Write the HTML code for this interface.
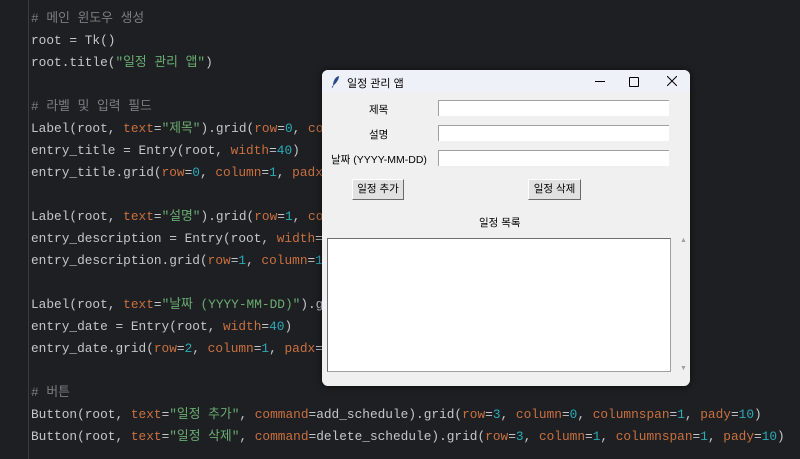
<!DOCTYPE html>
<html><head><meta charset="utf-8"><style>
body{margin:0;width:800px;height:459px;background:#1e1f22;overflow:hidden;position:relative;font-family:"Liberation Mono","Noto Sans CJK KR",monospace}
.gut{position:absolute;left:28px;top:0;width:1px;height:459px;background:#3a3b3f}
.code{position:absolute;left:31px;top:8px;font-size:12.8px;line-height:22px;color:#c4c6cc;white-space:pre}
.k{color:#c8703f}.s{color:#6aab73}.n{color:#2aacb8}.c{color:#7a7e85}
.win{position:absolute;left:322px;top:70px;width:368px;height:316px;background:#f0f0f0;border-radius:6px;box-shadow:0 0 8px rgba(0,0,0,.6);overflow:hidden;font-family:"Liberation Sans","Noto Sans CJK KR",sans-serif;font-size:10.5px;color:#000}
.tb{position:absolute;left:0;top:0;width:368px;height:22px;background:#eef2f8}
.a{position:absolute;white-space:nowrap}
.e{position:absolute;left:116px;width:230px;height:15px;background:#fff;border-top:1px solid #a0a0a0;border-left:1px solid #a0a0a0}
.b{position:absolute;top:109px;height:21px;background:#e1e1e1;border:1px solid #fff;border-right-color:#696969;border-bottom-color:#696969;box-sizing:border-box;text-align:center;line-height:19px}
</style></head><body>
<div class="gut"></div>
<div class="code"><span class="c"># 메인 윈도우 생성</span>
root = Tk()
root.title(<span class="s">"일정 관리 앱"</span>)

<span class="c"># 라벨 및 입력 필드</span>
Label(root, <span class="k">text</span>=<span class="s">"제목"</span>).grid(<span class="k">row</span>=<span class="n">0</span>, <span class="k">column</span>=<span class="n">0</span>)
entry_title = Entry(root, <span class="k">width</span>=<span class="n">40</span>)
entry_title.grid(<span class="k">row</span>=<span class="n">0</span>, <span class="k">column</span>=<span class="n">1</span>, <span class="k">padx</span>=<span class="n">5</span>)

Label(root, <span class="k">text</span>=<span class="s">"설명"</span>).grid(<span class="k">row</span>=<span class="n">1</span>, <span class="k">column</span>=<span class="n">0</span>)
entry_description = Entry(root, <span class="k">width</span>=<span class="n">40</span>)
entry_description.grid(<span class="k">row</span>=<span class="n">1</span>, <span class="k">column</span>=<span class="n">1</span>, <span class="k">padx</span>=<span class="n">5</span>)

Label(root, <span class="k">text</span>=<span class="s">"날짜 (YYYY-MM-DD)"</span>).grid(<span class="k">row</span>=<span class="n">2</span>)
entry_date = Entry(root, <span class="k">width</span>=<span class="n">40</span>)
entry_date.grid(<span class="k">row</span>=<span class="n">2</span>, <span class="k">column</span>=<span class="n">1</span>, <span class="k">padx</span>=<span class="n">5</span>)

<span class="c"># 버튼</span>
Button(root, <span class="k">text</span>=<span class="s">"일정 추가"</span>, <span class="k">command</span>=add_schedule).grid(<span class="k">row</span>=<span class="n">3</span>, <span class="k">column</span>=<span class="n">0</span>, <span class="k">columnspan</span>=<span class="n">1</span>, <span class="k">pady</span>=<span class="n">10</span>)
Button(root, <span class="k">text</span>=<span class="s">"일정 삭제"</span>, <span class="k">command</span>=delete_schedule).grid(<span class="k">row</span>=<span class="n">3</span>, <span class="k">column</span>=<span class="n">1</span>, <span class="k">columnspan</span>=<span class="n">1</span>, <span class="k">pady</span>=<span class="n">10</span>)</div>
<div class="win">
 <div class="tb"></div>
 <svg class="a" style="left:9px;top:5px" width="10" height="13" viewBox="0 0 10 13"><path d="M8 1C4 2 2 6 2 11L4 9C6 7 8 4 8 1Z" fill="#2b4a8a"/><path d="M2 11L1 12.5" stroke="#2b4a8a"/></svg>
 <div class="a" style="left:25px;top:5px;font-size:11px">일정 관리 앱</div>
 <div class="a" style="left:273px;top:11px;width:10px;height:1px;background:#000"></div>
 <div class="a" style="left:307px;top:7px;width:8px;height:8px;border:1px solid #000;border-radius:1px"></div>
 <svg class="a" style="left:345px;top:6px" width="10" height="10"><path d="M0 0L10 10M10 0L0 10" stroke="#000" stroke-width="1"/></svg>
 <div class="a" style="left:47px;top:32px">제목</div>
 <div class="a" style="left:47px;top:57px">설명</div>
 <div class="a" style="left:9px;top:82px">날짜 (YYYY-MM-DD)</div>
 <div class="e" style="top:30px"></div>
 <div class="e" style="top:55px"></div>
 <div class="e" style="top:80px"></div>
 <div class="b" style="left:30px;width:52px">일정 추가</div>
 <div class="b" style="left:206px;width:53px">일정 삭제</div>
 <div class="a" style="left:157px;top:145px">일정 목록</div>
 <div class="a" style="left:5px;top:168px;width:342px;height:132px;background:#fff;border:1px solid #6e6e6e;border-bottom-color:#a0a0a0;border-right-color:#a0a0a0"></div>
 <div class="a" style="left:358px;top:167px;font-size:7px;color:#a0a0a0">▲</div>
 <div class="a" style="left:358px;top:295px;font-size:7px;color:#a0a0a0">▼</div>
</div>
</body></html>
